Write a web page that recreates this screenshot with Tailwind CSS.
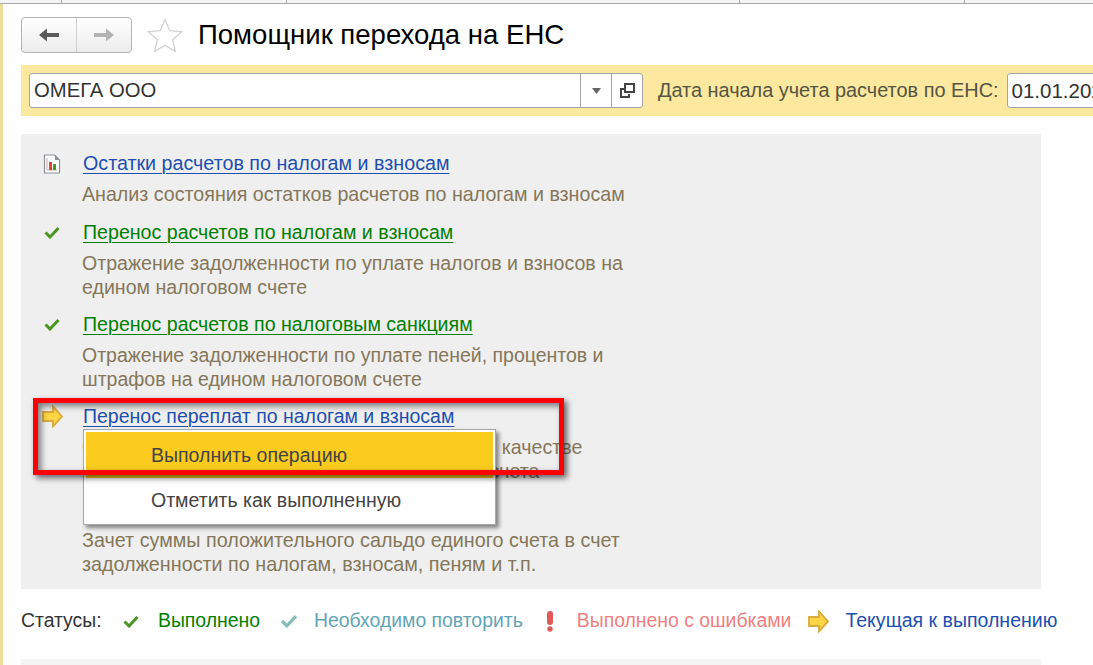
<!DOCTYPE html>
<html lang="ru">
<head>
    <meta charset="UTF-8">
    <title>Помощник перехода на ЕНС</title>
    <script src="https://cdn.jsdelivr.net/npm/@tailwindcss/browser@4"></script>
</head>
<body class="relative w-[1093px] h-[665px] overflow-hidden bg-white font-['Liberation_Sans',Arial,sans-serif]">
    <!-- tab strip -->
    <div class="flex h-[4px] border-b border-[#aaaaaa] bg-[#f4f4f4]">
        <div class="w-[62px] border-r border-[#aaaaaa]"></div>
        <div class="w-[225px] border-r border-[#aaaaaa]"></div>
        <div class="w-[453px] border-r border-[#aaaaaa]"></div>
        <div class="w-[225px] border-r border-[#aaaaaa]"></div>
    </div>

    <div class="h-[661px] border-l-[3px] border-[#ecdf9c] pl-[18px] overflow-hidden">
        <!-- header -->
        <div class="flex items-center h-[37px] mt-[12px]">
            <div class="flex w-[111px] h-[36px] rounded-[4px] border border-[#b4b4b4] bg-gradient-to-b from-white to-[#ececec]">
                <div class="flex items-center justify-center w-[55px] border-r border-[#cfcfcf]">
                    <svg width="22" height="16" viewBox="0 0 22 16"><path d="M21 6H9V1.500L1 8l8 6.500V10h12z" fill="#5c5c5c"/></svg>
                </div>
                <div class="flex items-center justify-center flex-1">
                    <svg width="22" height="16" viewBox="0 0 22 16"><path d="M1 6h12V1.500L21 8l-8 6.500V10H1z" fill="#b3b3b3"/></svg>
                </div>
            </div>
            <svg class="ml-[15px]" width="36" height="34" viewBox="0 0 36 34"><path d="M18 1.500l4.800 11.200 12 1-9.200 8 2.800 11.800L18 27.200 7.600 33.500l2.800-11.800-9.200-8 12-1z" fill="#fff" stroke="#cfcfcf" stroke-width="1.200"/></svg>
            <h1 class="ml-[15px] text-[27.550px] leading-[32px] text-black">Помощник перехода на ЕНС</h1>
        </div>

        <!-- filter bar -->
        <div class="flex items-center h-[51px] mt-[12px] pl-[8px] bg-[#fce89e] overflow-hidden">
            <div class="flex shrink-0 w-[614px] h-[35px] rounded-[3px] border border-[#a3a3a3] bg-white">
                <div class="flex-1 pl-[4px] text-[20.300px] leading-[33px] text-[#333333]">ОМЕГА ООО</div>
                <div class="flex items-center justify-center w-[31px] border-l border-[#a3a3a3]">
                    <svg width="9" height="6" viewBox="0 0 9 6"><path d="M0 0h9L4.500 6z" fill="#666666"/></svg>
                </div>
                <div class="flex items-center justify-center w-[31px] border-l border-[#a3a3a3]">
                    <svg width="15" height="15" viewBox="0 0 15 15" fill="none" stroke="#444444" stroke-width="2"><path d="M5 1h9v8H5z"/><path d="M5 6H1v8h8v-3"/></svg>
                </div>
            </div>
            <span class="ml-[15px] shrink-0 text-[19.900px] text-[#555544]">Дата начала учета расчетов по ЕНС:</span>
            <div class="ml-[8px] shrink-0 w-[120px] h-[35px] rounded-[3px] border border-[#a3a3a3] bg-white pl-[4px] text-[20.500px] leading-[33px] text-[#333333]">01.01.2023</div>
        </div>

        <!-- steps -->
        <div class="w-[1020px] h-[455px] mt-[18px] pt-[17px] bg-[#efefef] text-[19.500px] leading-[24px]">
            <div class="flex h-[69px]">
                <div class="flex justify-center w-[62px] pt-[3px]">
                    <svg width="18" height="20" viewBox="0 0 18 20"><path d="M1.500 1h10l5 5v13h-15z" fill="#fff" stroke="#8a8f98" stroke-width="1.200"/><path d="M12 1l4.500 5H12z" fill="#8a8f98"/><path d="M4 4v12h10" fill="none" stroke="#c9a9a9"/><rect x="6" y="8" width="3" height="8" fill="#e2452f"/><rect x="10" y="10" width="3" height="6" fill="#4c9a1f"/></svg>
                </div>
                <div>
                    <a class="underline underline-offset-[3px] decoration-1 text-[19.700px] text-[#1d4fb0]">Остатки расчетов по налогам и взносам</a>
                    <p class="mt-[7px] -ml-px text-[19.650px] text-[#84775a]">Анализ состояния остатков расчетов по налогам и взносам</p>
                </div>
            </div>
            <div class="flex h-[92px]">
                <div class="flex justify-center w-[62px] pt-[6px]">
                    <svg width="16" height="13" viewBox="0 0 16 13"><path d="M1.500 6.500l4.500 4.500 8.500-9" fill="none" stroke="#4a9623" stroke-width="3"/></svg>
                </div>
                <div>
                    <a class="underline underline-offset-[3px] decoration-1 text-[19.600px] text-[#008000]">Перенос расчетов по налогам и взносам</a>
                    <p class="mt-[7px] -ml-px text-[19.600px] text-[#84775a]">Отражение задолженности по уплате налогов и взносов на<br>едином налоговом счете</p>
                </div>
            </div>
            <div class="flex h-[92px]">
                <div class="flex justify-center w-[62px] pt-[6px]">
                    <svg width="16" height="13" viewBox="0 0 16 13"><path d="M1.500 6.500l4.500 4.500 8.500-9" fill="none" stroke="#4a9623" stroke-width="3"/></svg>
                </div>
                <div>
                    <a class="underline underline-offset-[3px] decoration-1 text-[19.600px] text-[#008000]">Перенос расчетов по налоговым санкциям</a>
                    <p class="mt-[7px] -ml-px text-[#84775a]">Отражение задолженности по уплате пеней, процентов и<br>штрафов на едином налоговом счете</p>
                </div>
            </div>
            <div class="flex">
                <div class="flex justify-center w-[62px] pt-[1px]">
                    <svg width="21" height="23" viewBox="0 0 21 23"><path d="M1 7h10V1.500L20 11.500l-9 10V16H1z" fill="#fbd545" stroke="#dba93c" stroke-width="1.800"/></svg>
                </div>
                <div>
                    <a class="underline underline-offset-[3px] decoration-1 text-[#1d4fb0]">Перенос переплат по налогам и взносам</a>
                    <p class="mt-[7px] -ml-px text-[19.650px] text-[#84775a]">Отражение переплат по налогам и взносам в качестве<br>положительного сальдо единого налогового счета</p>
                    <p class="mt-[45px] -ml-px text-[19.750px] text-[#84775a]">Зачет суммы положительного сальдо единого счета в счет<br>задолженности по налогам, взносам, пеням и т.п.</p>
                </div>
            </div>
        </div>

        <!-- statuses -->
        <div class="flex items-center h-[24px] mt-[20px] text-[19.400px] whitespace-nowrap">
            <span class="w-[102px] text-[#333333]">Статусы:</span>
            <svg width="16" height="13" viewBox="0 0 16 13"><path d="M1.500 6.500l4.500 4.500 8.500-9" fill="none" stroke="#4a9623" stroke-width="3"/></svg>
            <span class="ml-[19px] text-[#008000]">Выполнено</span>
            <svg class="ml-[20px]" width="18" height="14" viewBox="0 0 16 13"><path d="M1.500 6.500l4.500 4.500 8.500-9" fill="none" stroke="#86bdb8" stroke-width="3"/></svg>
            <span class="ml-[16px] text-[#62a5b4]">Необходимо повторить</span>
            <svg class="ml-[23px]" width="8" height="21" viewBox="0 0 8 21"><rect x="1" y="0" width="6" height="14" rx="3" fill="#e05a5a"/><circle cx="4" cy="18" r="2.700" fill="#e05a5a"/></svg>
            <span class="ml-[23px] text-[#f08080]">Выполнено с ошибками</span>
            <svg class="ml-[17px]" width="21" height="23" viewBox="0 0 21 23"><path d="M1 7h10V1.500L20 11.500l-9 10V16H1z" fill="#fbd545" stroke="#dba93c" stroke-width="1.800"/></svg>
            <span class="ml-[16px] text-[19.550px] text-[#1d4fb0]">Текущая к выполнению</span>
        </div>

        <div class="w-[1020px] h-[40px] mt-[26px] bg-[#f4f4f4]"></div>
    </div>

    <!-- popup menu -->
    <div class="absolute left-[83px] top-[429px] w-[413px] h-[96px] p-[2px] border border-[#a8a8a8] bg-white shadow-[3px_3px_4px_rgba(0,0,0,0.45)] text-[19.500px] text-[#444444]">
        <div class="h-[46px] pl-[65px] leading-[47px] bg-[#fbcb1e]">Выполнить операцию</div>
        <div class="h-[46px] pl-[65px] leading-[44px]">Отметить как выполненную</div>
    </div>
    <!-- red annotation frame -->
    <div class="absolute left-[33px] top-[398px] w-[531px] h-[77px] border-[5px] border-[#ff0000] shadow-[3px_3px_6px_rgba(0,0,0,0.6),inset_3px_3px_6px_rgba(0,0,0,0.5)]"></div>
</body>
</html>
